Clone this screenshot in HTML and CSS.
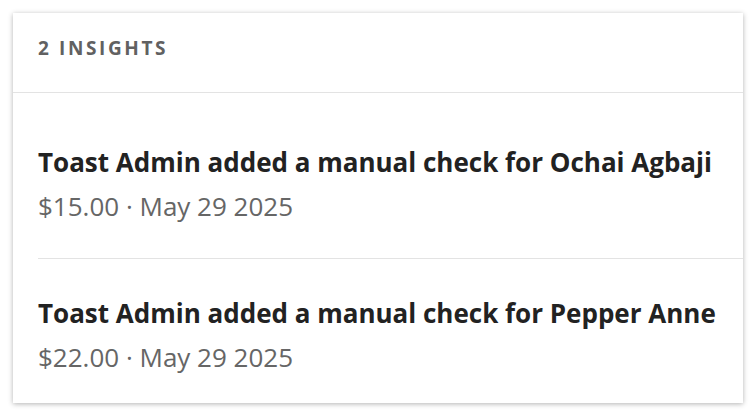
FILE: index.html
```html
<!DOCTYPE html>
<html>
<head>
<meta charset="utf-8">
<link rel="stylesheet" href="styles.css">
</head>
<body>
<div class="card">
  <div class="card-header">2 INSIGHTS</div>
  <ul class="list">
    <li class="item">
      <div class="title">Toast Admin added a manual check for Ochai Agbaji</div>
      <div class="meta">$15.00 · May 29 2025</div>
    </li>
    <li class="item">
      <div class="title">Toast Admin added a manual check for Pepper Anne</div>
      <div class="meta">$22.00 · May 29 2025</div>
    </li>
  </ul>
</div>
</body>
</html>
```
FILE: styles.css
```css
html, body {
  margin: 0;
  padding: 0;
  background: #ffffff;
}
body {
  padding: 13px 11px 13px 13px;
  min-height: 416px;
  box-sizing: border-box;
  font-family: "Open Sans", Lato, sans-serif;
}
.card {
  width: 730px;
  height: 390px;
  box-sizing: border-box;
  background: #fff;
  box-shadow: 0 1px 5px rgba(0, 0, 0, 0.3);
  overflow: hidden;
}
.card-header {
  height: 80px;
  box-sizing: border-box;
  padding: 23px 25px 0 25px;
  line-height: 24px;
  font-size: 19px;
  font-weight: 700;
  letter-spacing: 2.6px;
  color: #616161;
  border-bottom: 1px solid #e3e3e3;
}
.list {
  list-style: none;
  margin: 0;
  padding: 15px 0 0 25px;
}
.item {
  padding: 36px 0 34px 0;
  border-bottom: 1px solid #e3e3e3;
}
.item:last-child {
  border-bottom: none;
  padding-bottom: 29px;
}
.title {
  font-size: 26px;
  line-height: 36px;
  font-weight: 700;
  color: #222222;
  white-space: nowrap;
}
.meta {
  margin-top: 8px;
  font-size: 26px;
  line-height: 36px;
  color: #666666;
}
```
